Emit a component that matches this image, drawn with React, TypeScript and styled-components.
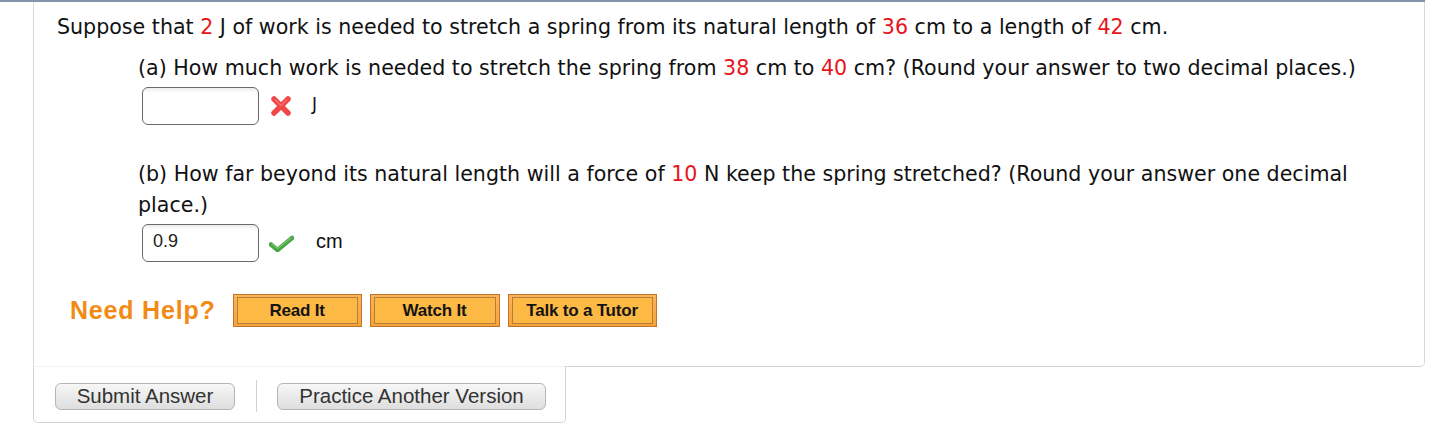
import React from 'react';
import styled, { createGlobalStyle } from 'styled-components';

const GlobalStyle = createGlobalStyle`
  body {
    margin: 0;
    background: #fff;
  }
`;

const Frame = styled.div`
  width: 1425px;
  border-top: 2px solid #8195aa;
`;

const Panel = styled.div`
  margin-left: 33px;
  border-left: 1px solid #d9d9d9;
  border-right: 1px solid #d9d9d9;
  border-bottom: 1px solid #d4d4d4;
  border-bottom-right-radius: 5px;
  padding: 10px 0 39px 23px;
  font-family: 'DejaVu Sans', Verdana, sans-serif;
  font-size: 20.6px;
  color: #111;
`;

const Lead = styled.p`
  margin: 0;
  line-height: 31px;
`;

const Part = styled.div<{ $gap: number }>`
  margin: ${p => p.$gap}px 0 0 81px;
  width: 1240px;
`;

const Prompt = styled.p`
  margin: 0;
  line-height: 31px;
`;

const Num = styled.span`
  color: #e8141b;
`;

const AnswerRow = styled.div`
  display: flex;
  align-items: center;
  margin: 3px 0 0 4px;
  height: 38px;
`;

const Field = styled.div`
  box-sizing: border-box;
  width: 117px;
  height: 38px;
  border: 1.5px solid #6a6a6a;
  border-radius: 6px;
  background: linear-gradient(#ececec 0, #fff 5px, #fff 100%);
  font-family: 'Liberation Sans', Arial, sans-serif;
  font-size: 18px;
  color: #222;
  padding: 6px 0 0 10px;
`;

const Mark = styled.span`
  display: inline-flex;
  width: 26px;
  margin-left: 9px;
  justify-content: center;
`;

const Unit = styled.span<{ $sans?: boolean; $gap: number }>`
  margin-left: ${p => p.$gap}px;
  font-family: ${p => (p.$sans ? "'Liberation Sans', Arial, sans-serif" : "'DejaVu Sans', Verdana, sans-serif")};
  font-size: ${p => (p.$sans ? '20px' : '17px')};
  margin-top: -4px;
`;

const HelpRow = styled.div`
  display: flex;
  align-items: center;
  margin: 32px 0 0 13px;
`;

const HelpLabel = styled.span`
  font-family: 'Liberation Sans', Arial, sans-serif;
  font-weight: bold;
  font-size: 25px;
  letter-spacing: 0.8px;
  color: #f28a14;
  margin-right: 17px;
`;

const HelpButton = styled.button<{ $w: number }>`
  box-sizing: border-box;
  width: ${p => p.$w}px;
  height: 33px;
  margin-right: 8px;
  padding: 2px 3px;
  border: 1px solid #c0732b;
  background: linear-gradient(#fcb45a, #f7a23a);
  cursor: pointer;
  display: flex;
`;

const HelpInner = styled.span`
  flex: 1;
  display: flex;
  align-items: center;
  justify-content: center;
  border: 1px solid #b57c3c;
  background: #fcb944;
  font-family: 'Liberation Sans', Arial, sans-serif;
  font-weight: bold;
  font-size: 17px;
  letter-spacing: -0.2px;
  color: #141414;
`;

const Footer = styled.div`
  position: relative;
  margin: -1px 0 0 33px;
  width: 533px;
  height: 57px;
  box-sizing: border-box;
  background: #fff;
  border: 1px solid #d4d4d4;
  border-top-color: #f2f2f2;
  border-radius: 0 0 5px 5px;
  display: flex;
  align-items: center;
  padding: 3px 0 0 21px;
`;

const GrayButton = styled.button<{ $w: number }>`
  box-sizing: border-box;
  width: ${p => p.$w}px;
  height: 27px;
  border: 1px solid #b5b5b5;
  border-radius: 6px;
  background: linear-gradient(#f7f7f7, #dedede);
  font-family: 'Liberation Sans', Arial, sans-serif;
  font-size: 20.5px;
  color: #333;
  padding: 0;
  cursor: pointer;
`;

const Divider = styled.span`
  width: 1px;
  height: 32px;
  background: #d0d0d0;
  margin: 0 20px 0 21px;
`;

const Cross = () => (
  <svg width="22" height="22" viewBox="0 0 22 22">
    <path d="M4 4 L18 18 M18 4 L4 18" stroke="#f04848" strokeWidth="5.5" strokeLinecap="round" />
    <path d="M5.5 5 L11 10.5 L16.5 5" stroke="#ff8a8a" strokeWidth="1.4" fill="none" strokeLinecap="round" opacity="0.6" />
  </svg>
);

const Check = () => (
  <svg width="25" height="17" viewBox="0 0 25 17">
    <path d="M2 9.5 L8.5 15 L23 3" stroke="#4aa548" strokeWidth="4.5" fill="none" strokeLinecap="round" strokeLinejoin="round" />
    <path d="M3 9 L8.5 13.5 L22 3" stroke="#7fcf6f" strokeWidth="1.3" fill="none" strokeLinecap="round" opacity="0.8" />
  </svg>
);

const App: React.FC = () => {
  return (
    <>
      <GlobalStyle />
      <Frame>
        <Panel>
          <Lead>
            Suppose that <Num>2</Num> J of work is needed to stretch a spring from its natural length of{' '}
            <Num>36</Num> cm to a length of <Num>42</Num> cm.
          </Lead>
          <Part $gap={10}>
            <Prompt>
              (a) How much work is needed to stretch the spring from <Num>38</Num> cm to <Num>40</Num> cm? (Round
              your answer to two decimal places.)
            </Prompt>
            <AnswerRow>
              <Field />
              <Mark>
                <Cross />
              </Mark>
              <Unit $gap={18}>J</Unit>
            </AnswerRow>
          </Part>
          <Part $gap={34}>
            <Prompt>
              (b) How far beyond its natural length will a force of <Num>10</Num> N keep the spring stretched? (Round
              your answer one decimal place.)
            </Prompt>
            <AnswerRow>
              <Field>0.9</Field>
              <Mark>
                <Check />
              </Mark>
              <Unit $sans $gap={22}>cm</Unit>
            </AnswerRow>
          </Part>
          <HelpRow>
            <HelpLabel>Need Help?</HelpLabel>
            <HelpButton $w={129}>
              <HelpInner>Read It</HelpInner>
            </HelpButton>
            <HelpButton $w={130}>
              <HelpInner>Watch It</HelpInner>
            </HelpButton>
            <HelpButton $w={149}>
              <HelpInner>Talk to a Tutor</HelpInner>
            </HelpButton>
          </HelpRow>
        </Panel>
        <Footer>
          <GrayButton $w={180}>Submit Answer</GrayButton>
          <Divider />
          <GrayButton $w={269}>Practice Another Version</GrayButton>
        </Footer>
      </Frame>
    </>
  );
};

export default App;
